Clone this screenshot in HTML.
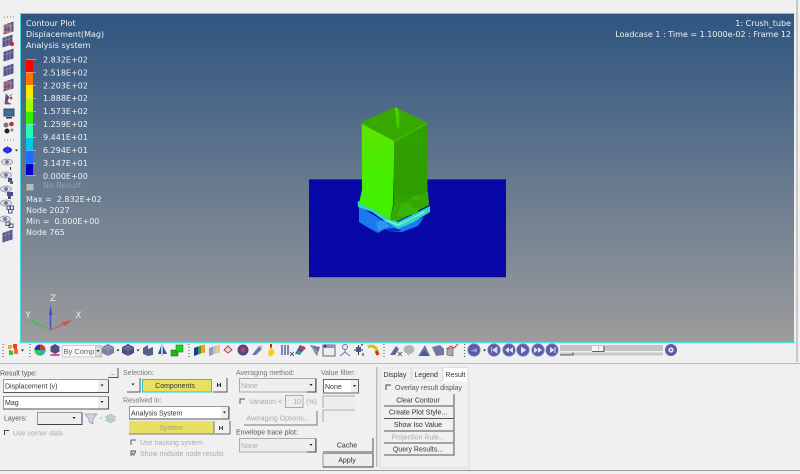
<!DOCTYPE html>
<html><head><meta charset="utf-8"><style>
html,body{margin:0;padding:0;background:#f0f0f0;width:800px;height:474px;overflow:hidden}
svg{display:block;position:absolute;left:0;top:0;filter:blur(.35px)}
.v{font:8px "DejaVu Sans",sans-serif;fill:#eef1f4}
.p{font:7px "Liberation Sans",sans-serif;fill:#555}
.d{font:7px "Liberation Sans",sans-serif;fill:#aaa}
.b{font:7px "Liberation Sans",sans-serif;fill:#333}
</style></head><body>
<svg width="800" height="474" viewBox="0 0 800 474" xmlns="http://www.w3.org/2000/svg">
<defs>
<linearGradient id="bg" x1="0" y1="0" x2="0" y2="1"><stop offset="0" stop-color="#2f5580"/><stop offset="1" stop-color="#9c9c9c"/></linearGradient>
<linearGradient id="lf" x1="0" y1="0" x2="0" y2="1"><stop offset="0" stop-color="#60e400"/><stop offset=".5" stop-color="#48ee00"/><stop offset="1" stop-color="#3ff000"/></linearGradient>
<linearGradient id="rf" x1="0" y1="0" x2="0" y2="1"><stop offset="0" stop-color="#30a000"/><stop offset=".7" stop-color="#2f9c00"/><stop offset="1" stop-color="#38b400"/></linearGradient>
<linearGradient id="cr" x1="0" y1="0" x2="1" y2="0"><stop offset="0" stop-color="#55e800"/><stop offset="1" stop-color="#38aa00"/></linearGradient>
<g id="sheet"><path d="M-5.500 -3L4.500 -6.500V3.500L-5.500 6.500Z" fill="#55558c"/><path d="M-2 -4V5M1 -5V4.500M-5 0L4 -3" stroke="#aab" stroke-width=".5"/></g>
<g id="eye"><ellipse cx="0" cy="0" rx="5.500" ry="3" fill="#dcdce6" stroke="#889" stroke-width=".7"/><circle cx="0" cy="0" r="1.900" fill="#6a7498"/></g>
<g id="nav"><circle r="6.200" fill="#5a5caa"/><circle r="6.200" fill="none" stroke="#8587c4" stroke-width=".8"/></g>
<g id="ar"><path d="M-1.500 -1H1.500L0 1Z" fill="#222"/></g>
<g id="dots"><path d="M0 -6V7" stroke="#555" stroke-width="1" stroke-dasharray="1 2"/></g>
<g id="hdots"><path d="M-5 0H6" stroke="#777" stroke-width="1" stroke-dasharray="1 2"/></g>
<g id="cube"><path d="M0 -6L6 -3V3L0 6L-6 3V-3Z" fill="#45507e"/><path d="M-6 -3L0 0L6 -3M0 0V6M-3 -4.500L3 -1.500M3 -4.500L-3 -1.500" stroke="#8f96b8" stroke-width=".6" fill="none"/></g>
</defs>

<rect width="800" height="474" fill="#f0f0f0"/>
<rect x="21" y="14" width="773" height="328" fill="url(#bg)"/>
<path d="M20.500 342V13.500H794.500" fill="none" stroke="#4fd6dc" stroke-width="1"/>
<path d="M20 342.500H795" stroke="#55dce0" stroke-width="1.400"/>
<path d="M797 0V362" stroke="#555" stroke-width="1" opacity=".5"/>

<!-- model -->
<rect x="309" y="179.400" width="197" height="97.800" fill="#0808a6"/>
<path d="M359 206L359 222L367 227L378 233L385 229L392 232L402 232L418 226L424 217L398 228L385 222Z" fill="#1c78ee"/>
<path d="M376 222L385 220L390 226L384 230L378 230Z" fill="#2e96f0"/>
<path d="M382 229L392 232L402 231L396 228Z" fill="#0a2cc8"/>
<path d="M357.700 201L358 207L372 212L385 221L398 229L414 222L430 212L430 206L398 222L388 216Z" fill="#30d4c8"/>
<path d="M386 219.500L398 224L412 218L424 211L425 212.500L398 226L386 221Z" fill="#7cefe0"/>
<path d="M361.700 125Q361.500 123.500 363 122.500L393 139.500Q394.300 140.500 394.300 142L393 205L390 220L376 211L359 203L362 190Z" fill="url(#lf)"/>
<path d="M394.300 142Q394.500 140.500 396 139.500L425.500 122.500Q427 123 427 125L427.500 190L429 205L398 221L390 220L393.500 205Z" fill="url(#rf)"/>
<path d="M395 212L408 200L418 195L428 192L429 205L398 221L390 219Z" fill="#33a800"/>
<path d="M402 203H412V208H418V213L404 217L396 216Z" fill="#39b400"/>
<path d="M412 196H420V200H412Z" fill="#39b400"/>
<path d="M361.700 124Q362 122 364 121L393 107.800Q395 107 397 107.800L425 121.500Q427 122.500 427 123.500L396 140.500Q394.300 141.500 393 140.500Z" fill="#36a800"/>
<path d="M395 107.400L398 108.500L401 115L399 129L396.500 126L396 117Z" fill="url(#cr)"/>
<path d="M361.700 124L393.500 141M427 123.500L395 141" stroke="#46e000" stroke-width=".7" fill="none"/>

<!-- overlay text -->
<text class="v" x="26" y="26">Contour Plot</text>
<text class="v" x="26" y="37">Displacement(Mag)</text>
<text class="v" x="26" y="48">Analysis system</text>
<rect x="26" y="60" width="7" height="12" fill="#f00"/><rect x="26" y="72" width="7" height="13" fill="#ff7300"/><rect x="26" y="85" width="7" height="13" fill="#ffe600"/><rect x="26" y="98" width="7" height="13" fill="#a8ff00"/><rect x="26" y="111" width="7" height="13" fill="#38ee00"/><rect x="26" y="124" width="7" height="13" fill="#20ffb4"/><rect x="26" y="137" width="7" height="13" fill="#00c8e0"/><rect x="26" y="150" width="7" height="13" fill="#1a70ff"/><rect x="26" y="163" width="7" height="12" fill="#0000c8"/>
<path d="M26 59.500H36M26 72.500H36M26 85.500H36M26 98.500H36M26 111.500H36M26 124.500H36M26 137.500H36M26 150.500H36M26 163.500H36M26 175.500H36" stroke="#d8dde2" stroke-width=".6"/>
<text class="v" x="43" y="62.500">2.832E+02</text>
<text class="v" x="43" y="75.500">2.518E+02</text>
<text class="v" x="43" y="88.500">2.203E+02</text>
<text class="v" x="43" y="101">1.888E+02</text>
<text class="v" x="43" y="114">1.573E+02</text>
<text class="v" x="43" y="127">1.259E+02</text>
<text class="v" x="43" y="140">9.441E+01</text>
<text class="v" x="43" y="153">6.294E+01</text>
<text class="v" x="43" y="166">3.147E+01</text>
<text class="v" x="43" y="179">0.000E+00</text>
<rect x="26.500" y="184" width="7" height="6.500" fill="#bbb"/>
<text class="v" x="43" y="188" style="fill:#9aa0a6">No Result</text>
<text class="v" x="26" y="202" xml:space="preserve">Max =  2.832E+02</text>
<text class="v" x="26" y="213">Node 2027</text>
<text class="v" x="26" y="224" xml:space="preserve">Min =  0.000E+00</text>
<text class="v" x="26" y="235">Node 765</text>
<text class="v" x="791" y="26" text-anchor="end">1: Crush_tube</text>
<text class="v" x="791" y="37" text-anchor="end">Loadcase 1 : Time = 1.1000e-02 : Frame 12</text>

<!-- triad -->
<path d="M50.500 330V310" stroke="#4a50d0" stroke-width="1.600"/><path d="M49 315L50.500 304L52.500 315Z" fill="#4a50d0"/>
<path d="M50.500 330L70 321" stroke="#d05050" stroke-width="1"/><path d="M62 322L72 320L65 326Z" fill="#d05050"/>
<path d="M50.500 330L30 320" stroke="#40c040" stroke-width="1"/><path d="M35 321L29 319L39 327Z" fill="#40c040"/>
<text class="v" x="50" y="301" style="fill:#eee;font-size:8.500px">Z</text>
<text class="v" x="75.500" y="318" style="fill:#eee;font-size:8.500px">X</text>
<text class="v" x="25.500" y="318" style="fill:#eee;font-size:8.500px">Y</text>

<!-- left toolbar -->
<use href="#hdots" x="9" y="17"/>
<use href="#sheet" x="9" y="28"/><path d="M4 25H11V32H4Z" fill="none" stroke="#e08868" stroke-width="1"/>
<use href="#sheet" x="8" y="41"/><circle cx="12" cy="44" r="2" fill="#d02020"/>
<use href="#sheet" x="9" y="55"/><use href="#sheet" x="9" y="70"/>
<use href="#sheet" x="9" y="85"/><path d="M4 82H11V89H4Z" fill="none" stroke="#e07060" stroke-width="1"/>
<path d="M6 94L9 97L7 102L11 104L5 104ZM10 96L12 94" fill="#44508a" stroke="#667" stroke-width=".8"/><circle cx="11" cy="98" r="1.400" fill="#d03030"/>
<rect x="4" y="109" width="10" height="7" fill="#3570a0" stroke="#445"/><rect x="6" y="117" width="6" height="1.500" fill="#334"/>
<circle cx="6" cy="125" r="2.500" fill="#777"/><circle cx="11.500" cy="124" r="2.300" fill="#c03030"/><circle cx="7" cy="131" r="2.500" fill="#222"/><circle cx="12" cy="130" r="1.500" fill="#888"/>
<use href="#hdots" x="9" y="140"/>
<ellipse cx="7.500" cy="150" rx="4.500" ry="3" fill="#2020d0"/><path d="M7.500 146L11 150L7.500 154L4 150Z" fill="#2830e0"/><use href="#ar" x="16.500" y="150.500"/>
<use href="#eye" x="7" y="162"/><path d="M10.500 167V170" stroke="#333"/>
<use href="#eye" x="6" y="175"/><rect x="8" y="178" width="4" height="4" fill="#44508a"/><rect x="10" y="181" width="3" height="3" fill="#667"/>
<use href="#eye" x="6" y="189"/><path d="M7 192H13V196H11V199H8V196H7Z" fill="#44508a"/>
<use href="#eye" x="6" y="203"/><rect x="7" y="206" width="3.500" height="3.500" fill="none" stroke="#44508a"/><rect x="10" y="206" width="3.500" height="3.500" fill="none" stroke="#44508a"/><rect x="8.500" y="209.500" width="3.500" height="3.500" fill="none" stroke="#44508a"/>
<use href="#eye" x="5" y="219"/><rect x="6" y="222" width="4" height="3.500" fill="none" stroke="#44508a"/><rect x="9" y="224" width="4" height="3.500" fill="none" stroke="#44508a"/>
<use href="#sheet" x="8" y="236"/>

<!-- horizontal toolbar -->
<path d="M0 363.500H800" stroke="#bbb" stroke-width="1"/>
<use href="#dots" x="3" y="350"/><use href="#dots" x="30" y="350"/><use href="#dots" x="189" y="350"/><use href="#dots" x="384" y="350"/><use href="#dots" x="464.500" y="350"/>
<g transform="translate(13 350)"><rect x="-5" y="-5" width="4" height="4" fill="#e8b020"/><rect x="0" y="-6" width="4" height="5" fill="#e84020"/><rect x="-4" y="0" width="4" height="5" fill="#40c040"/><rect x="1" y="-1" width="4" height="5" fill="#f07030"/><rect x="-2" y="-2" width="3" height="3" fill="#eee"/></g><use href="#ar" x="22.500" y="350.500"/>
<circle cx="40" cy="350" r="5.500" fill="#2030c0"/><path d="M40 350L40 344.500A5.500 5.500 0 0 1 45.500 350Z" fill="#e03030"/><path d="M40 350L45.500 350A5.500 5.500 0 0 1 40 355.500Z" fill="#30b0a0"/><path d="M40 350L40 355.500A5.500 5.500 0 0 1 34.500 350Z" fill="#30d040"/>
<path d="M50.500 346.500L55 344L59.500 346.500V351.500L55 354L50.500 351.500Z" fill="#4a5080"/><rect x="50.500" y="354" width="9" height="2" fill="#e05090"/>
<rect x="62.500" y="345.500" width="39" height="11.500" fill="#f8f8f8" stroke="#ccc"/>
<text class="p" x="63.500" y="354" style="fill:#666;font-size:7.500px">By Comp</text>
<rect x="95.500" y="346" width="5.500" height="10.500" fill="#ddd" stroke="#aaa" stroke-width=".5"/><use href="#ar" x="98" y="351"/>
<use href="#cube" x="108" y="350" opacity=".7"/><use href="#ar" x="118" y="350.500"/>
<use href="#cube" x="128" y="350"/><use href="#ar" x="138" y="350.500"/>
<path d="M143 348L148 345V349L153 347V355L148 356L143 354Z" fill="#566088"/>
<path d="M158 354L161 346V354ZM163 346L167 354H163Z" fill="#2a50a8"/><path d="M162 344V356" stroke="#555" stroke-width=".5"/>
<rect x="171" y="350" width="7" height="6" fill="#22b020" stroke="#0a7010" stroke-width=".5"/><rect x="176" y="345" width="7" height="7" fill="#22d020" stroke="#0a7010" stroke-width=".5"/>
<path d="M194 348L198 346.500V354.500L194 356Z" fill="#203898"/><path d="M198 346.500L201 345.500V353.500L198 354.500Z" fill="#40a040"/><path d="M201 345.500L205 344.500V352.500L201 353.500Z" fill="#e8a020"/>
<path d="M209 348L213 346.500V354.500L209 356Z" fill="#9098c8"/><path d="M213 346.500L216 345.500V353.500L213 354.500Z" fill="#b0d0b0"/><path d="M216 345.500L220 344.500V352.500L216 353.500Z" fill="#f0c090"/>
<path d="M224 350L228 346L232 350L228 353Z" fill="#d8d8f0" stroke="#c04040" stroke-width="1"/>
<circle cx="243" cy="350" r="5.500" fill="#4a4a80"/><circle cx="243" cy="350" r="2.500" fill="#c04060"/>
<path d="M252 355L259 346L262 349L256 355Z" fill="#6a78a8"/><circle cx="261" cy="347" r="1.500" fill="#bbb"/>
<path d="M271 344V348" stroke="#d02020" stroke-width="2"/><path d="M268 352L271 347L275 352L272 356H269Z" fill="#f8d010"/>
<path d="M282 345V355M285 345V355M288 345V355" stroke="#5a60a0" stroke-width="1.500"/><path d="M290 352L294 356M294 352L290 356" stroke="#333" stroke-width=".8"/>
<path d="M295 354L300 345L306 348L300 354Z" fill="#4a5a98"/><circle cx="303" cy="348" r="2" fill="#d04040"/><circle cx="299" cy="353" r="2" fill="#30a080"/>
<path d="M310 345L320 347L317 356Z" fill="#6a7298"/><path d="M312 347L318 353" stroke="#ccd" stroke-width=".7"/>
<rect x="323" y="345" width="12" height="11" fill="#eee" stroke="#667"/><rect x="323" y="345" width="12" height="3" fill="#9098b0"/><circle cx="325" cy="346" r="1.500" fill="#2040c0"/>
<circle cx="345" cy="347" r="2.500" fill="none" stroke="#6a78b0"/><path d="M345 349.500V352L340 356M345 352L350 356" stroke="#6a78b0" fill="none"/>
<path d="M354 350H363M358.500 345V355" stroke="#333" stroke-width="1"/><rect x="356" y="347" width="5" height="5" fill="#4a5a90"/><path d="M363 344L361 345.500M363 356V353" stroke="#222"/>
<path d="M368 347C374 344 378 349 378 355" stroke="#d8c020" stroke-width="3" fill="none"/><path d="M376 351L378 355" stroke="#d03030" stroke-width="3"/>
<path d="M390 355L396 346L399 349L395 355Z" fill="#5a6898"/><path d="M398 352L402 356M402 352L398 356" stroke="#444" stroke-width=".8"/>
<ellipse cx="409" cy="349.500" rx="5.500" ry="4.500" fill="#b4b4b4"/><path d="M407 353L408 356L411 353Z" fill="#b4b4b4"/>
<path d="M418 356L425 345L430 356Z" fill="#6a78a8"/><path d="M424 350L430 356H420Z" fill="#4a5a90"/>
<path d="M432 347L440 345L444 349V355L436 356Z" fill="#7078a0"/>
<path d="M447 355V348H453V356Z" fill="#aaa" stroke="#556" stroke-width=".6"/><path d="M447 349L451 346L454 348L458 344" stroke="#d03030" fill="none"/>
<use href="#nav" x="474" y="350"/><path d="M470 351L477 348V352Z" fill="#9a9cd0"/><use href="#ar" x="484.500" y="350.500"/>
<use href="#nav" x="494" y="350"/><path d="M491.500 347V353M497 347V353L492.500 350Z" fill="#d8d8ee" stroke="#d8d8ee" stroke-width=".7"/>
<use href="#nav" x="509" y="350"/><path d="M509 347V353L505 350ZM513 347V353L509 350Z" fill="#e0e0f0"/>
<use href="#nav" x="523" y="350"/><path d="M521 346.500V353.500L526.500 350Z" fill="#e0e0f0"/>
<use href="#nav" x="538" y="350"/><path d="M534 347V353L538 350ZM538 347V353L542 350Z" fill="#e0e0f0"/>
<use href="#nav" x="552" y="350"/><path d="M550 347V353L554.500 350Z" fill="#e0e0f0"/><path d="M555 347V353" stroke="#e0e0f0"/>
<rect x="560" y="345" width="103" height="6" fill="#c4c4c4"/><rect x="560" y="352.500" width="103" height="3" fill="#c8c8c8"/>
<rect x="592" y="346" width="6" height="5" fill="#f6f6f6"/><rect x="599" y="346" width="4" height="5" fill="#f6f6f6"/><path d="M592 351.500H604V346" stroke="#333" fill="none" stroke-width=".7"/>
<path d="M560 355H573V352.500" stroke="#333" fill="none" stroke-width=".8"/>
<circle cx="671" cy="350" r="6" fill="#5a5caa"/><circle cx="671" cy="350" r="2.600" fill="#e6e6f0"/><circle cx="671" cy="350" r="1" fill="#5a5caa"/>

<!-- bottom panel -->
<path d="M0 470.500H800" stroke="#999" stroke-width="1"/>
<text class="p" x="0" y="375.500">Result type:</text>
<rect x="108" y="368" width="10" height="9.500" fill="#f0f0f0"/><path d="M118 368V377.500H108" stroke="#555" fill="none"/><text class="p" x="110" y="375" style="font-size:6px">...</text>
<!-- combos -->
<rect x="3.500" y="379.500" width="105" height="13" fill="#fff" stroke="#999"/><path d="M108.500 379.500V392.500H3.500" stroke="#555" fill="none"/><text class="b" x="5" y="388.500">Displacement (v)</text>
<rect x="98" y="380" width="10" height="12" fill="#eee"/><use href="#ar" x="102" y="385.500"/>
<rect x="3.500" y="396.500" width="105" height="12.500" fill="#fff" stroke="#999"/><path d="M108.500 396.500V409H3.500" stroke="#555" fill="none"/><text class="b" x="5" y="405">Mag</text>
<rect x="98" y="397" width="10" height="11.500" fill="#eee"/><use href="#ar" x="102" y="402"/>
<text class="p" x="4" y="420.500">Layers:</text>
<rect x="37.500" y="412.500" width="44.500" height="12" fill="#eee" stroke="#999"/><path d="M82 412.500V424.500H38" stroke="#444" fill="none"/><use href="#ar" x="74" y="418"/>
<path d="M85 414H97L93 419V424L89 422V419Z" fill="#c8d8e0" stroke="#99a" stroke-width=".7"/><path d="M100 418H102" stroke="#aaa"/>
<path d="M105 417L110.500 414L116 417L110.500 420Z M105 420L110.500 423L116 420L110.500 418Z" fill="#b8d8b8" stroke="#aab" stroke-width=".5"/>
<rect x="4.500" y="430.500" width="4.500" height="4.500" fill="#eee"/><path d="M4.500 435V430.500H9" stroke="#444" fill="none"/>
<text class="d" x="13" y="435.500">Use corner data</text>

<text class="d" x="123" y="375" style="fill:#777">Selection:</text>
<rect x="127" y="378" width="13" height="14" fill="#f0f0f0"/><path d="M140 378V392H127" stroke="#555" fill="none"/><use href="#ar" x="133" y="384.500"/>
<rect x="142.500" y="379.500" width="69" height="12.500" fill="#e8e060" stroke="#20c8c8"/><text class="b" x="175" y="388" text-anchor="middle">Components</text>
<rect x="213" y="378" width="14" height="14" fill="#f0f0f0"/><path d="M227 378V392H213" stroke="#555" fill="none"/><path d="M217.500 383V387M220.500 383V387M217.500 385H220.500" stroke="#222"/>
<text class="d" x="123" y="402.500" style="fill:#777">Resolved in:</text>
<rect x="129.500" y="406.500" width="99" height="12.500" fill="#fff" stroke="#999"/><path d="M229 406.500V419H129.500" stroke="#555" fill="none"/><text class="b" x="131" y="415.500">Analysis System</text>
<rect x="221" y="407" width="7" height="11.500" fill="#eee"/><use href="#ar" x="224.500" y="412.500"/>
<rect x="129" y="421" width="85" height="13" fill="#e8e060"/><path d="M214 421V434H129" stroke="#777" fill="none"/><text class="d" x="171" y="430" text-anchor="middle" style="fill:#999">System</text>
<rect x="215" y="421" width="15" height="13" fill="#f0f0f0"/><path d="M230 421V434H215" stroke="#666" fill="none"/><path d="M219.500 426V430M222.500 426V430M219.500 428H222.500" stroke="#444"/>
<rect x="131" y="440" width="5" height="5" fill="#eee"/><path d="M131 445V440H136" stroke="#555" fill="none"/><text class="d" x="140" y="445">Use tracking system</text>
<rect x="131" y="451" width="5" height="5" fill="#ddd"/><path d="M131 456V451H136" stroke="#555" fill="none"/><path d="M132 453L133.500 455L135.500 451.500" stroke="#666" fill="none"/><text class="d" x="140" y="456">Show midside node results</text>

<text class="d" x="236" y="375" style="fill:#777">Averaging method:</text>
<rect x="239.500" y="378.500" width="76" height="13.500" fill="#eee" stroke="#aaa"/><path d="M316 378.500V392H307" stroke="#444" fill="none"/><text class="d" x="241" y="388">None</text><use href="#ar" x="311" y="385"/>
<rect x="240" y="399" width="5" height="5" fill="#eee"/><path d="M240 404V399H245" stroke="#555" fill="none"/>
<text class="d" x="249" y="404">Variation &lt;</text>
<rect x="285.500" y="395.500" width="17.500" height="12" fill="#eee" stroke="#aaa"/><text class="d" x="301" y="404" text-anchor="end">10</text>
<text class="d" x="306" y="404">(%)</text>
<rect x="244" y="411" width="73" height="14" fill="#f0f0f0"/><path d="M317 411V425H244" stroke="#777" fill="none"/><text class="d" x="278" y="420.500" text-anchor="middle">Averaging Options...</text>
<text class="p" x="236" y="434.500">Envelope trace plot:</text>
<rect x="239.500" y="438.500" width="76" height="13.500" fill="#eee" stroke="#aaa"/><path d="M316 438.500V452H307" stroke="#444" fill="none"/><text class="d" x="241" y="448">None</text><use href="#ar" x="311" y="445"/>

<text class="d" x="321" y="375" style="fill:#777">Value filter:</text>
<rect x="323.500" y="379.500" width="35" height="13.500" fill="#fff" stroke="#666"/><text class="b" x="325" y="389">None</text><rect x="351" y="380" width="7" height="12.500" fill="#eee"/><use href="#ar" x="354.500" y="386"/>
<rect x="323" y="396" width="32" height="12" fill="#eee"/><path d="M323 408V396H355" stroke="#aaa" fill="none"/>
<rect x="323" y="410" width="32" height="12" fill="#eee"/><path d="M323 422V410H355" stroke="#aaa" fill="none"/>
<rect x="322.500" y="438" width="50.500" height="14" fill="#f0f0f0"/><path d="M373 438V452H323" stroke="#555" fill="none"/><text class="b" x="347" y="447.500" text-anchor="middle">Cache</text>
<rect x="323" y="453.500" width="50" height="13.500" fill="#eee" stroke="#999"/><path d="M373 453.500V467H323" stroke="#444" fill="none"/><text class="b" x="347" y="462.500" text-anchor="middle">Apply</text>

<rect x="376" y="367" width="1.500" height="100" fill="#bbb"/>
<rect x="380" y="380" width="89" height="88" fill="#f0f0f0" stroke="#ddd"/>
<path d="M380 380V368H411V380M412 380V368H442V380" fill="#f0f0f0" stroke="#e2e2e2"/>
<rect x="443" y="367.500" width="25" height="14" fill="#fff"/>
<path d="M443 381V367.500H468V381" fill="none" stroke="#ddd"/>
<text class="b" x="383.500" y="377">Display</text><text class="b" x="414.500" y="377">Legend</text><text class="b" x="445.500" y="377">Result</text>
<rect x="386" y="385" width="5" height="5" fill="#eee"/><path d="M386 390V385H391" stroke="#444" fill="none"/>
<text class="p" x="395" y="390">Overlay result display</text>
<g>
<path d="M454 394V406H384" stroke="#555" fill="none"/><text class="b" x="418" y="402.500" text-anchor="middle">Clear Contour</text>
<path d="M454 407V418.500H384" stroke="#555" fill="none"/><text class="b" x="418" y="414.500" text-anchor="middle">Create Plot Style...</text>
<path d="M454 419.500V431H384" stroke="#555" fill="none"/><text class="b" x="418" y="427" text-anchor="middle">Show Iso Value</text>
<path d="M454 432V443H384" stroke="#555" fill="none"/><text class="d" x="418" y="439.500" text-anchor="middle">Projection Rule...</text>
<path d="M454 444V455H384" stroke="#555" fill="none"/><text class="b" x="418" y="451.500" text-anchor="middle">Query Results...</text>
</g>
</svg>
</body></html>
